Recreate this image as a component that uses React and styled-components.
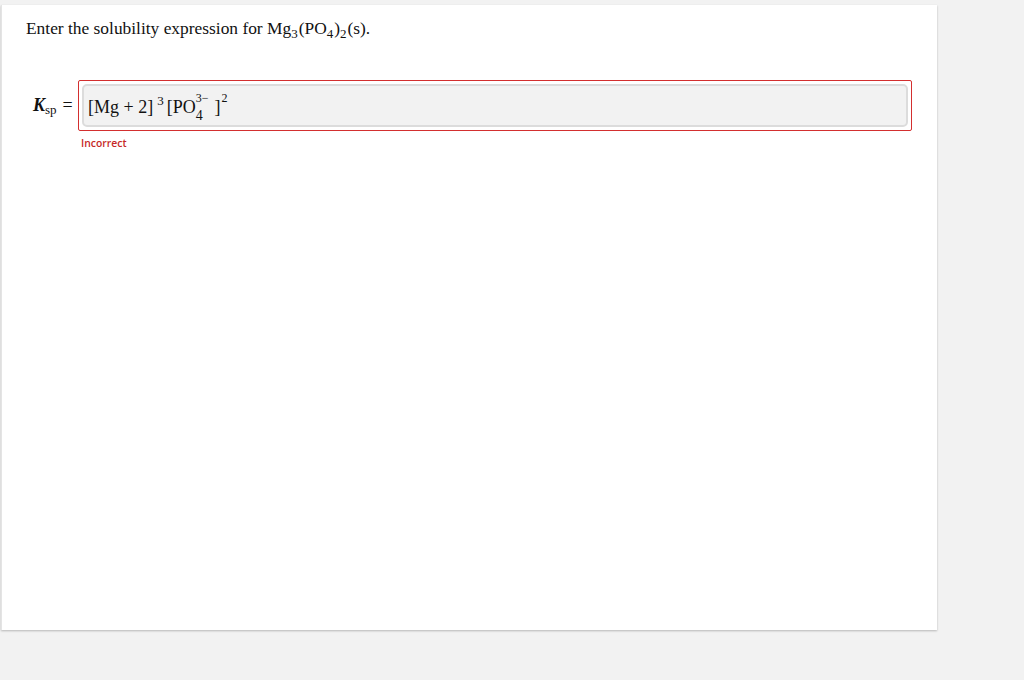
import styled, { createGlobalStyle } from "styled-components";

const GlobalStyle = createGlobalStyle`
  html, body {
    margin: 0;
    padding: 0;
    background: #f2f2f2;
  }
`;

const Page = styled.div`
  width: 1024px;
  height: 680px;
  padding-top: 5px;
  padding-left: 1px;
  box-sizing: border-box;
`;

const Card = styled.div`
  width: 936px;
  height: 625px;
  background: #fff;
  box-shadow: 0 1px 2px rgba(0, 0, 0, 0.25);
  border-left: 1px solid #e4e4e4;
  box-sizing: border-box;
  padding: 13px 0 0 24px;
`;

const Prompt = styled.p`
  margin: 0;
  font-family: "Liberation Serif", "Times New Roman", serif;
  font-size: 17.4px;
  line-height: 20px;
  color: #111;
`;

const Sub = styled.sub`
  font-size: ${(p) => p.$size || "13px"};
  vertical-align: ${(p) => p.$down || "-4px"};
  line-height: 0;
  margin-right: ${(p) => p.$gap || "1px"};
`;

const Sup = styled.sup`
  font-size: ${(p) => p.$size || "12px"};
  vertical-align: ${(p) => p.$up || "8px"};
  line-height: 0;
  margin: 0 ${(p) => p.$right || "0"} 0 ${(p) => p.$left || "0"};
`;

const AnswerRow = styled.div`
  display: flex;
  align-items: center;
  margin-top: 42px;
  margin-left: 7px;
`;

const Label = styled.div`
  font-family: "Liberation Serif", "Times New Roman", serif;
  font-size: 18px;
  color: #111;
  width: 45px;
  display: flex;
  align-items: baseline;
  gap: 6px;
`;

const KItalic = styled.span`
  font-style: italic;
  font-weight: bold;
`;

const Field = styled.div`
  flex: none;
  width: 834px;
  height: 51px;
  border: 1px solid #d32f2f;
  border-radius: 2px;
  padding: 3px;
  box-sizing: border-box;
`;

const Input = styled.div`
  height: 100%;
  background: #f2f2f2;
  border: 2px solid #dcdcdc;
  border-radius: 5px;
  box-sizing: border-box;
  padding: 2px 0 0 4px;
  font-family: "Liberation Serif", "Times New Roman", serif;
  font-size: 18px;
  line-height: 39px;
  color: #111;
  white-space: pre;
`;

const Stack = styled.span`
  display: inline-flex;
  flex-direction: column;
  vertical-align: 11px;
  line-height: 17px;
  margin: 0 6px 0 0;
`;

const StackPart = styled.span`
  font-size: ${(p) => p.$size};
`;

const Feedback = styled.div`
  margin: 5px 0 0 55px;
  font-family: "Open Sans", "Liberation Sans", sans-serif;
  font-size: 10.4px;
  font-weight: 600;
  color: #c62828;
`;

export default function App() {
  return (
    <>
      <GlobalStyle />
      <Page>
        <Card>
          <Prompt>
            Enter the solubility expression for Mg<Sub>3</Sub>(PO<Sub>4</Sub>)
            <Sub>2</Sub>(s).
          </Prompt>
          <AnswerRow>
            <Label>
              <span>
                <KItalic>K</KItalic>
                <Sub $size="13px" $down="-3px" $gap="0">sp</Sub>
              </span>
              <span>=</span>
            </Label>
            <Field>
              <Input>
                [Mg + 2]<Sup $size="13px" $left="4px" $right="3px">3</Sup>[PO
                <Stack>
                  <StackPart $size="12px">3−</StackPart>
                  <StackPart $size="14px">4</StackPart>
                </Stack>
                ]<Sup $up="11px" $left="1px">2</Sup>
              </Input>
            </Field>
          </AnswerRow>
          <Feedback>Incorrect</Feedback>
        </Card>
      </Page>
    </>
  );
}
